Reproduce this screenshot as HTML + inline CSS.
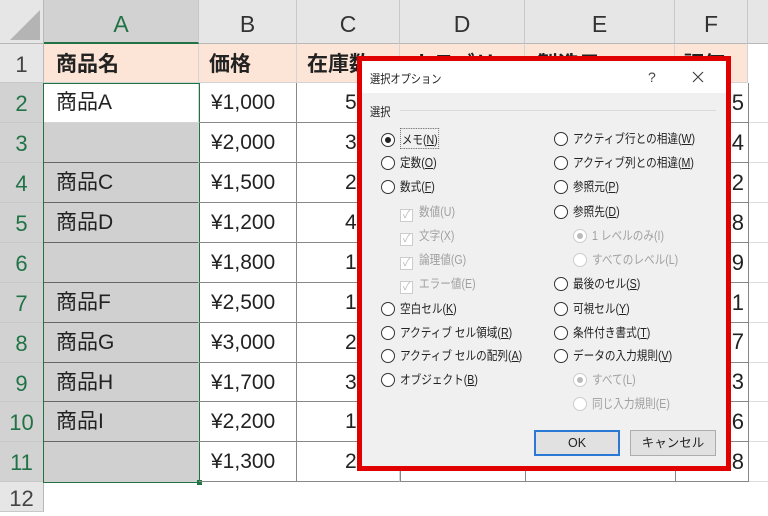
<!DOCTYPE html>
<html><head><meta charset="utf-8"><style>
*{margin:0;padding:0;box-sizing:border-box}
body{width:768px;height:495px;overflow:hidden;background:#fff;position:relative;font-family:"Liberation Sans","Noto Sans CJK JP",sans-serif;color:#222}
.a{position:absolute}
.ch{position:absolute;top:0;height:44px;background:#e6e6e6;border-right:1px solid #c8c8c8;border-bottom:1px solid #b8b8b8;font-size:23px;color:#333;text-align:center;line-height:48px}
.rh{position:absolute;left:0;width:44px;background:#e6e6e6;border-bottom:1px solid #c8c8c8;border-right:1px solid #b8b8b8;font-size:22px;color:#217346;text-align:center}
.c{position:absolute;font-size:21px;border-right:1px solid #d4d4d4;border-bottom:1px solid #d4d4d4;padding:0 12px;white-space:nowrap;overflow:hidden}
.dl{font-size:12.5px;color:#222;position:absolute;white-space:nowrap}
.t{display:inline-block;transform:scaleX(.85);transform-origin:0 50%}
.dis{color:#a0a0a0}
.r{display:inline-block;width:14px;height:14px;border:1px solid #333;border-radius:50%;background:#fff;vertical-align:-3px;margin-right:5px;position:relative}
.r.on::after{content:"";position:absolute;left:3px;top:3px;width:6px;height:6px;border-radius:50%;background:#222}
.r.d{border-color:#ccc}
.r.d.on::after{background:#bbb}
.k{display:inline-block;width:13px;height:13px;border:1px solid #ccc;background:#fff;vertical-align:-2px;margin-right:6px;position:relative;color:#bbb;font-size:11px;line-height:11px;text-align:center}
u{text-decoration:underline}
</style></head><body>
<div class="a" style="left:0;top:0;width:44px;height:44px;background:#e6e6e6;border-right:1px solid #b8b8b8;border-bottom:1px solid #b8b8b8"></div>
<div class="a" style="left:10px;top:10px;width:0;height:0;border-left:30px solid transparent;border-bottom:30px solid #b4b4b4"></div>
<div class="ch" style="left:44px;width:155px;background:#d2d2d2;color:#217346;border-bottom:2px solid #217346">A</div>
<div class="ch" style="left:199px;width:98px">B</div>
<div class="ch" style="left:297px;width:103px">C</div>
<div class="ch" style="left:400px;width:125px">D</div>
<div class="ch" style="left:525px;width:150px">E</div>
<div class="ch" style="left:675px;width:73px">F</div>
<div class="ch" style="left:748px;width:30px"></div>

<div class="rh" style="top:44px;height:39px;line-height:42px;color:#444">1</div>
<div class="rh" style="top:83px;height:40px;line-height:42px;background:#d2d2d2">2</div>
<div class="rh" style="top:123px;height:40px;line-height:42px;background:#d2d2d2">3</div>
<div class="rh" style="top:163px;height:40px;line-height:42px;background:#d2d2d2">4</div>
<div class="rh" style="top:203px;height:40px;line-height:42px;background:#d2d2d2">5</div>
<div class="rh" style="top:243px;height:40px;line-height:42px;background:#d2d2d2">6</div>
<div class="rh" style="top:283px;height:40px;line-height:42px;background:#d2d2d2">7</div>
<div class="rh" style="top:323px;height:40px;line-height:42px;background:#d2d2d2">8</div>
<div class="rh" style="top:363px;height:39px;line-height:42px;background:#d2d2d2">9</div>
<div class="rh" style="top:402px;height:40px;line-height:42px;background:#d2d2d2">10</div>
<div class="rh" style="top:442px;height:40px;line-height:42px;background:#d2d2d2">11</div>
<div class="rh" style="top:482px;height:30px;line-height:34px;color:#444">12</div>

<div class="c" style="left:44px;top:44px;width:155px;height:39px;background:#fce4d6;font-weight:bold;line-height:42px">商品名</div>
<div class="c" style="left:199px;top:44px;width:98px;height:39px;background:#fce4d6;font-weight:bold;line-height:42px;padding-left:10px">価格</div>
<div class="c" style="left:297px;top:44px;width:103px;height:39px;background:#fce4d6;font-weight:bold;line-height:42px;padding-left:10px">在庫数</div>
<div class="c" style="left:400px;top:44px;width:125px;height:39px;background:#fce4d6;font-weight:bold;line-height:42px">カテゴリ</div>
<div class="c" style="left:525px;top:44px;width:150px;height:39px;background:#fce4d6;font-weight:bold;line-height:42px">製造元</div>
<div class="c" style="left:675px;top:44px;width:73px;height:39px;background:#fce4d6;font-weight:bold;line-height:42px;padding-left:8px">評価</div>

<div class="a" style="left:44px;top:123px;width:155px;height:359px;background:#d0d0d0"></div>
<div class="c" style="left:44px;top:83px;width:155px;height:40px;line-height:40px;background:#fff">商品A</div>
<div class="c" style="left:44px;top:123px;width:155px;height:40px;border-bottom-color:#666"></div>
<div class="c" style="left:44px;top:163px;width:155px;height:40px;line-height:40px;border-bottom-color:#666">商品C</div>
<div class="c" style="left:44px;top:203px;width:155px;height:40px;line-height:40px;border-bottom-color:#666">商品D</div>
<div class="c" style="left:44px;top:243px;width:155px;height:40px;border-bottom-color:#666"></div>
<div class="c" style="left:44px;top:283px;width:155px;height:40px;line-height:40px;border-bottom-color:#666">商品F</div>
<div class="c" style="left:44px;top:323px;width:155px;height:40px;line-height:40px;border-bottom-color:#666">商品G</div>
<div class="c" style="left:44px;top:363px;width:155px;height:39px;line-height:39px;border-bottom-color:#666">商品H</div>
<div class="c" style="left:44px;top:402px;width:155px;height:40px;line-height:40px;border-bottom-color:#666">商品I</div>
<div class="a" style="left:43px;top:83px;width:157px;height:400px;border:1.5px solid #217346"></div>
<div class="a" style="left:197px;top:480px;width:5px;height:5px;background:#217346"></div>

<div class="c" style="left:199px;top:83px;width:98px;height:40px;line-height:40px;padding-left:12px;border-bottom-color:#888;border-right-color:#888">¥1,000</div>
<div class="c" style="left:199px;top:123px;width:98px;height:40px;line-height:40px;padding-left:12px;border-bottom-color:#888;border-right-color:#888">¥2,000</div>
<div class="c" style="left:199px;top:163px;width:98px;height:40px;line-height:40px;padding-left:12px;border-bottom-color:#888;border-right-color:#888">¥1,500</div>
<div class="c" style="left:199px;top:203px;width:98px;height:40px;line-height:40px;padding-left:12px;border-bottom-color:#888;border-right-color:#888">¥1,200</div>
<div class="c" style="left:199px;top:243px;width:98px;height:40px;line-height:40px;padding-left:12px;border-bottom-color:#888;border-right-color:#888">¥1,800</div>
<div class="c" style="left:199px;top:283px;width:98px;height:40px;line-height:40px;padding-left:12px;border-bottom-color:#888;border-right-color:#888">¥2,500</div>
<div class="c" style="left:199px;top:323px;width:98px;height:40px;line-height:40px;padding-left:12px;border-bottom-color:#888;border-right-color:#888">¥3,000</div>
<div class="c" style="left:199px;top:363px;width:98px;height:39px;line-height:39px;padding-left:12px;border-bottom-color:#888;border-right-color:#888">¥1,700</div>
<div class="c" style="left:199px;top:402px;width:98px;height:40px;line-height:40px;padding-left:12px;border-bottom-color:#888;border-right-color:#888">¥2,200</div>
<div class="c" style="left:199px;top:442px;width:98px;height:40px;line-height:40px;padding-left:12px;border-bottom-color:#888;border-right-color:#888">¥1,300</div>

<div class="c" style="left:297px;top:83px;width:103px;height:40px;line-height:40px;padding-left:48px;border-bottom-color:#888">50</div>
<div class="c" style="left:297px;top:123px;width:103px;height:40px;line-height:40px;padding-left:48px;border-bottom-color:#888">30</div>
<div class="c" style="left:297px;top:163px;width:103px;height:40px;line-height:40px;padding-left:48px;border-bottom-color:#888">20</div>
<div class="c" style="left:297px;top:203px;width:103px;height:40px;line-height:40px;padding-left:48px;border-bottom-color:#888">40</div>
<div class="c" style="left:297px;top:243px;width:103px;height:40px;line-height:40px;padding-left:48px;border-bottom-color:#888">15</div>
<div class="c" style="left:297px;top:283px;width:103px;height:40px;line-height:40px;padding-left:48px;border-bottom-color:#888">10</div>
<div class="c" style="left:297px;top:323px;width:103px;height:40px;line-height:40px;padding-left:48px;border-bottom-color:#888">25</div>
<div class="c" style="left:297px;top:363px;width:103px;height:39px;line-height:39px;padding-left:48px;border-bottom-color:#888">35</div>
<div class="c" style="left:297px;top:402px;width:103px;height:40px;line-height:40px;padding-left:48px;border-bottom-color:#888">18</div>
<div class="c" style="left:297px;top:442px;width:103px;height:40px;line-height:40px;padding-left:48px;border-bottom-color:#888">22</div>
<div class="a" style="left:400px;top:83px;width:1px;height:399px;background:#888"></div>
<div class="a" style="left:525px;top:83px;width:1px;height:399px;background:#888"></div>
<div class="a" style="left:675px;top:83px;width:1px;height:399px;background:#888"></div>
<div class="a" style="left:748px;top:83px;width:1px;height:399px;background:#888"></div>
<div class="a" style="left:400px;top:481px;width:348px;height:1px;background:#888"></div>
<div class="a" style="left:676px;top:83px;width:72px;font-size:22px;text-align:right;padding-right:4px;line-height:39.9px">5<br>4<br>2<br>8<br>9<br>1<br>7<br>3<br>6<br>8</div>
<div class="a" style="left:676px;top:122px;width:72px;height:1px;background:#888;box-shadow:0 40px #888,0 80px #888,0 120px #888,0 160px #888,0 200px #888,0 240px #888,0 279px #888,0 319px #888"></div>
<div class="a" style="left:749px;top:122px;width:19px;height:1px;background:#ddd;box-shadow:0 40px #ddd,0 80px #ddd,0 120px #ddd,0 160px #ddd,0 200px #ddd,0 240px #ddd,0 279px #ddd,0 319px #ddd,0 359px #ddd"></div>

<div class="a" style="left:357px;top:56px;width:374px;height:415px;border:5px solid #e00000;background:#f0f0f0"></div>
<div class="a" style="left:362px;top:61px;width:364px;height:32px;background:#fff"></div>
<div class="dl" style="left:370px;top:70px;font-size:12px"><span class="t">選択オプション</span></div>
<div class="dl" style="left:648px;top:69px;font-size:14px;color:#444">?</div>
<svg class="a" style="left:692px;top:71px" width="12" height="12" viewBox="0 0 12 12"><path d="M1 1L11 11M11 1L1 11" stroke="#444" stroke-width="1.2" fill="none"/></svg>
<div class="dl" style="left:370px;top:103px;font-size:12px"><span class="t">選択</span></div>
<div class="a" style="left:400px;top:110px;width:316px;height:1px;background:#dadada"></div>

<div class="dl" style="left:381px;top:128px"><span class="r on"></span><span class="t" style="border:1px dotted #666;padding:0 1px">メモ(<u>N</u>)</span></div>
<div class="dl" style="left:381px;top:152px"><span class="r"></span><span class="t">定数(<u>O</u>)</span></div>
<div class="dl" style="left:381px;top:176px"><span class="r"></span><span class="t">数式(<u>F</u>)</span></div>
<div class="dl dis" style="left:400px;top:201px"><span class="k">✓</span><span class="t">数値(U)</span></div>
<div class="dl dis" style="left:400px;top:225px"><span class="k">✓</span><span class="t">文字(X)</span></div>
<div class="dl dis" style="left:400px;top:249px"><span class="k">✓</span><span class="t">論理値(G)</span></div>
<div class="dl dis" style="left:400px;top:273px"><span class="k">✓</span><span class="t">エラー値(E)</span></div>
<div class="dl" style="left:381px;top:298px"><span class="r"></span><span class="t">空白セル(<u>K</u>)</span></div>
<div class="dl" style="left:381px;top:322px"><span class="r"></span><span class="t">アクティブ セル領域(<u>R</u>)</span></div>
<div class="dl" style="left:381px;top:345px"><span class="r"></span><span class="t">アクティブ セルの配列(<u>A</u>)</span></div>
<div class="dl" style="left:381px;top:369px"><span class="r"></span><span class="t">オブジェクト(<u>B</u>)</span></div>

<div class="dl" style="left:554px;top:128px"><span class="r"></span><span class="t">アクティブ行との相違(<u>W</u>)</span></div>
<div class="dl" style="left:554px;top:152px"><span class="r"></span><span class="t">アクティブ列との相違(<u>M</u>)</span></div>
<div class="dl" style="left:554px;top:176px"><span class="r"></span><span class="t">参照元(<u>P</u>)</span></div>
<div class="dl" style="left:554px;top:201px"><span class="r"></span><span class="t">参照先(<u>D</u>)</span></div>
<div class="dl dis" style="left:573px;top:225px"><span class="r d on"></span><span class="t">1 レベルのみ(I)</span></div>
<div class="dl dis" style="left:573px;top:249px"><span class="r d"></span><span class="t">すべてのレベル(L)</span></div>
<div class="dl" style="left:554px;top:273px"><span class="r"></span><span class="t">最後のセル(<u>S</u>)</span></div>
<div class="dl" style="left:554px;top:298px"><span class="r"></span><span class="t">可視セル(<u>Y</u>)</span></div>
<div class="dl" style="left:554px;top:322px"><span class="r"></span><span class="t">条件付き書式(<u>T</u>)</span></div>
<div class="dl" style="left:554px;top:345px"><span class="r"></span><span class="t">データの入力規則(<u>V</u>)</span></div>
<div class="dl dis" style="left:573px;top:369px"><span class="r d on"></span><span class="t">すべて(L)</span></div>
<div class="dl dis" style="left:573px;top:393px"><span class="r d"></span><span class="t">同じ入力規則(E)</span></div>

<div class="a" style="left:534px;top:430px;width:86px;height:26px;background:#e1e1e1;border:2px solid #2a7ad5;font-size:12.5px;text-align:center;line-height:22px">OK</div>
<div class="a" style="left:630px;top:430px;width:86px;height:26px;background:#e1e1e1;border:1px solid #adadad;font-size:12.5px;text-align:center;line-height:24px">キャンセル</div>
</body></html>
